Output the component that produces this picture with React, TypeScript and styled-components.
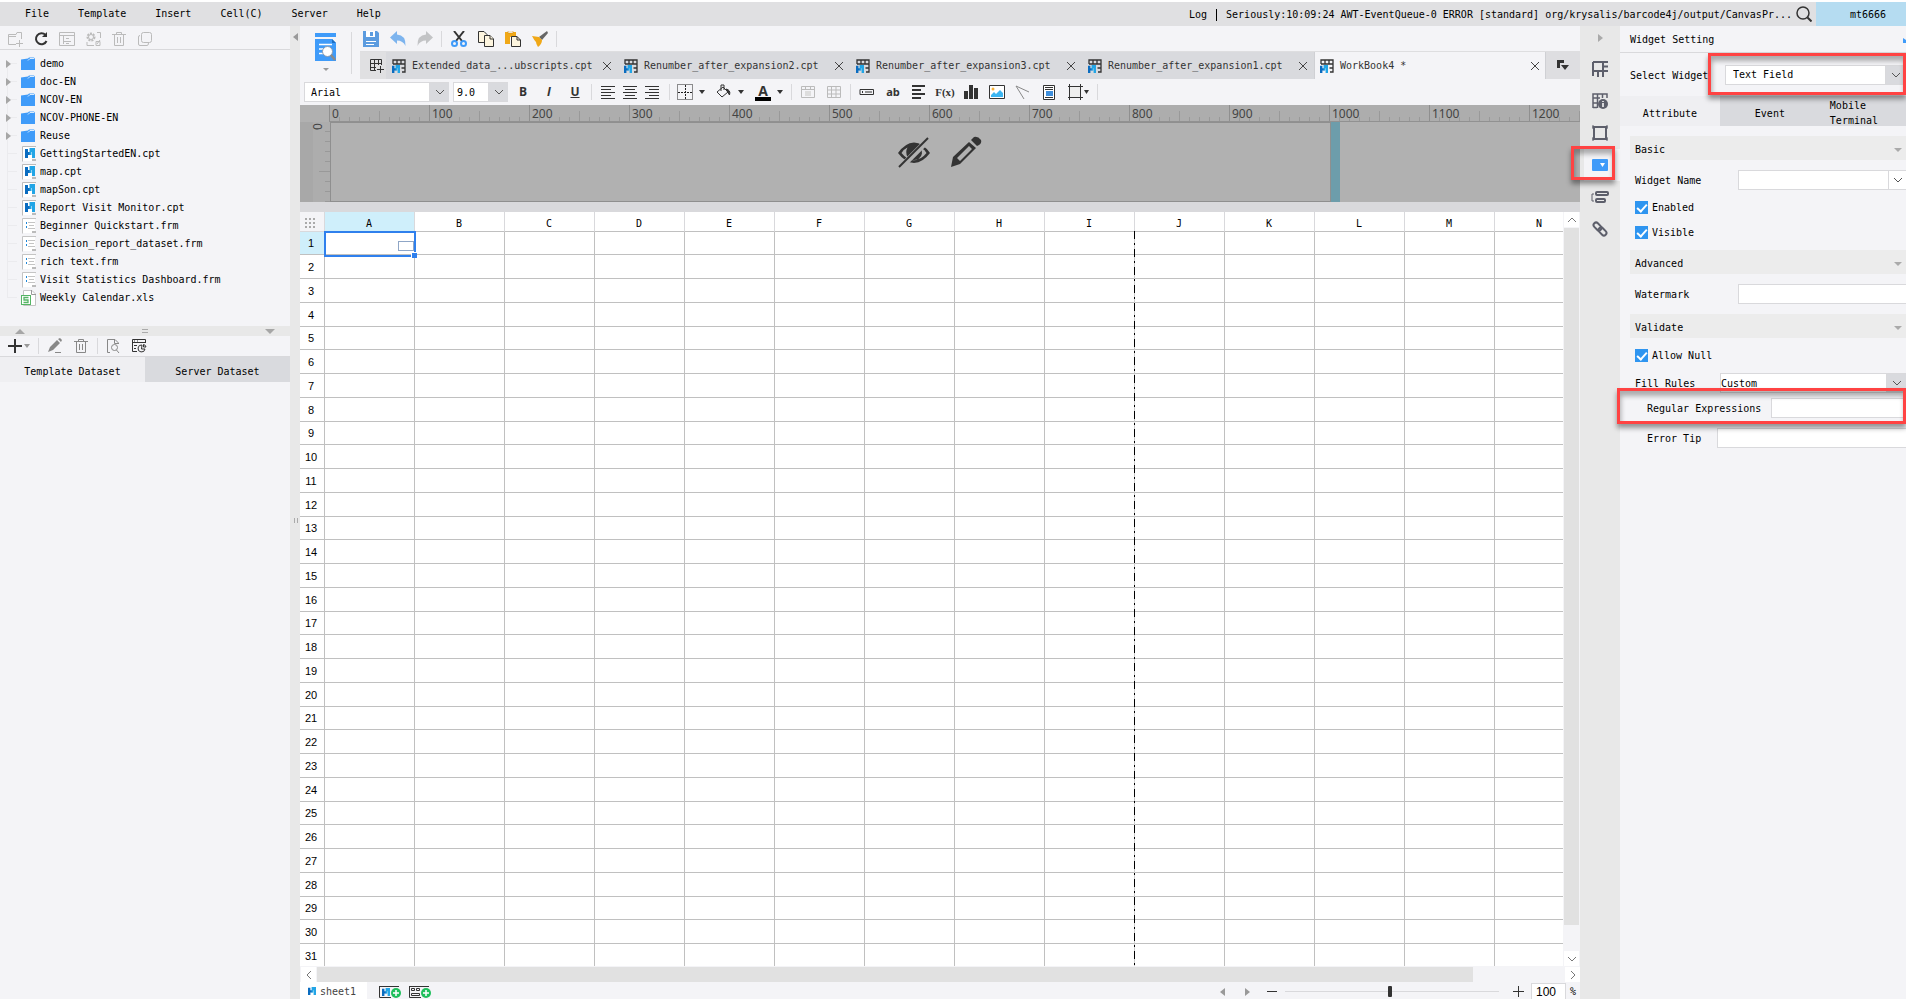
import React from "react";
import styled, { createGlobalStyle, css } from "styled-components";

const c = {
  bar: "#e0e0e2",
  panel: "#f4f4f7",
  tab: "#d9dade",
  line: "#d9d9dc",
  strip: "#e8e8e8",
  branch: "#ebebee",
  mute: "#a6a6a6",
  blue: "#3f9bf9",
  pick: "#cfeffb",
  alert: "#ff4343",
};

const Global = createGlobalStyle`
  * { box-sizing: border-box; }
  html, body, #root { height: 100%; }
  body { margin: 0; overflow: hidden; background: #fff; color: #000;
    font: 10px/16px "DejaVu Sans Mono", "Liberation Mono", monospace; }
  button, input, select { font: inherit; color: inherit; margin: 0; }
  button { padding: 0; border: 0; background: none; }
  svg { display: block; flex: none; }
`;

const Page = styled.div`
  display: flex;
  flex-direction: column;
  height: 100vh;
  padding-top: 2px;
`;

const MenuBar = styled.header`
  display: flex;
  align-items: center;
  height: 24px;
  flex: none;
  background: ${c.bar};
`;
const Menus = styled.nav`
  display: flex;
  gap: 29px;
  padding-left: 25px;
  flex: 1;
`;
const MenuButton = styled.button`
  white-space: pre;
`;
const Log = styled.div`
  display: flex;
  align-items: center;
  gap: 9px;
  padding-top: 2px;
  white-space: nowrap;
`;
const LogBar = styled.span`
  width: 1px;
  height: 12px;
  background: #000;
`;
const SearchButton = styled.button`
  margin: 0 4px;
`;
const User = styled.button`
  width: 90px;
  height: 24px;
  padding: 2px 0 0 14px;
  background: #b5dcf1;
`;

const Body = styled.div`
  display: flex;
  flex: 1;
  min-height: 0;
`;

/* ---------- left: files and datasets ---------- */

const Left = styled.aside`
  display: flex;
  flex-direction: column;
  width: 290px;
  flex: none;
  background: ${c.panel};
`;
const FileTools = styled.div`
  display: flex;
  align-items: center;
  gap: 10px;
  height: 24px;
  padding: 2px 0 0 7px;
  border-bottom: 1px solid ${c.line};
`;
const Tree = styled.ul`
  list-style: none;
  margin: 0;
  padding: 5px 0 19px;
  background: linear-gradient(${c.branch}, ${c.branch}) 7px 14px / 1px calc(100% - 42px) no-repeat;
`;
const TreeItem = styled.li`
  display: flex;
  align-items: center;
  height: 18px;
  padding-left: 6px;
  white-space: nowrap;
`;
const Twisty = styled.span<{ $open: boolean }>`
  width: 15px;
  height: 8px;
  background: linear-gradient(${c.branch}, ${c.branch}) 2px 3px / 9px 1px no-repeat;
  ${(p) => p.$open && css`
    &::before {
      content: "";
      display: block;
      width: 5px;
      height: 8px;
      background: ${c.mute};
      clip-path: polygon(0 0, 100% 50%, 0 100%);
    }
  `}
`;
const FileName = styled.span`
  padding-left: 4px;
`;
const Splitter = styled.div`
  display: flex;
  align-items: center;
  justify-content: space-between;
  height: 10px;
  padding: 0 15px;
  background: ${c.strip};
`;
const DataTools = styled.div`
  display: flex;
  align-items: center;
  height: 21px;
  border-bottom: 1px solid ${c.line};
`;
const Group = styled.div<{ $gap?: number; $last?: boolean; $left?: number }>`
  display: flex;
  align-items: center;
  gap: ${(p) => p.$gap ?? 10}px;
  height: 16px;
  padding: 0 8px 0 ${(p) => p.$left ?? 8}px;
  border-right: ${(p) => (p.$last ? "0" : "1px solid " + c.line)};
`;
const Split = styled.button<{ $gap?: number }>`
  display: flex;
  align-items: center;
  gap: ${(p) => p.$gap ?? 6}px;
`;
const DataTabs = styled.div`
  display: flex;
`;
const DataTab = styled.button<{ $on?: boolean }>`
  flex: 1;
  height: 25px;
  padding-top: 5px;
  background: ${(p) => (p.$on ? "#efeff2" : c.tab)};
`;

const Gutter = styled.div`
  display: flex;
  flex-direction: column;
  align-items: center;
  width: 10px;
  flex: none;
  padding: 7px 0 0 1px;
  background: ${c.strip};
`;
const Grip = styled.span`
  width: 4px;
  height: 5px;
  margin: auto;
  border: solid #aaa;
  border-width: 0 1px;
`;

/* ---------- centre: designer ---------- */

const Centre = styled.main`
  display: flex;
  flex-direction: column;
  flex: 1;
  min-width: 0;
  background: ${c.panel};
`;
const Top = styled.div`
  display: flex;
  height: 53px;
  flex: none;
`;
const Preview = styled.button`
  display: flex;
  flex-direction: column;
  align-items: center;
  width: 52px;
  height: 42px;
  margin: 6px 8px 0 0;
  border-right: 1px solid ${c.line};
`;
const TopRight = styled.div`
  flex: 1;
  min-width: 0;
`;
const EditTools = styled.div`
  display: flex;
  align-items: center;
  height: 25px;
`;
const FileTabs = styled.div`
  display: flex;
  height: 28px;
  background: ${c.bar};
  border-top: 1px solid #dedee0;
`;
const AddTab = styled.button`
  width: 26px;
  padding-left: 9px;
`;
const FileTab = styled.div<{ $on?: boolean }>`
  display: flex;
  align-items: center;
  width: 232px;
  padding: 0 5px;
  gap: 6px;
  white-space: nowrap;
  color: #333;
  background: ${(p) => (p.$on ? c.panel : c.tab)};
  border: solid ${(p) => (p.$on ? "#cfd0d4" : c.tab)};
  border-width: 0 1px;
`;
const TabName = styled.span`
  flex: 1;
`;
const TabMenu = styled.button`
  flex: 1;
  padding-left: 11px;
  background: #dedee1;
`;
const Format = styled.div`
  display: flex;
  align-items: center;
  height: 26px;
  padding-left: 4px;
  flex: none;
`;
const Letter = styled.button<{ $i?: boolean; $u?: boolean }>`
  width: 16px;
  font: bold 12px/14px "Open Sans", sans-serif;
  font-style: ${(p) => (p.$i ? "italic" : "normal")};
  text-decoration: ${(p) => (p.$u ? "underline" : "none")};
  color: #333;
`;
const Word = styled.button<{ $serif?: boolean }>`
  width: 16px;
  display: flex;
  justify-content: center;
  font: bold 11px/14px ${(p) => (p.$serif ? '"Liberation Serif", serif' : '"Open Sans", sans-serif')};
  color: #333;
`;
const FontColor = styled.span`
  width: 16px;
  border-bottom: 4px solid #000;
  font: bold 14px/13px "Open Sans", sans-serif;
  color: #333;
`;

const ComboBox = styled.span<{ $w?: number }>`
  position: relative;
  display: flex;
  height: 20px;
  ${(p) => (p.$w ? css`width: ${p.$w}px; margin-right: 4px;` : css`flex: 1;`)}
`;
const Select = styled.select<{ $pad?: number }>`
  appearance: none;
  width: 100%;
  height: 20px;
  padding: 1px 20px 0 ${(p) => p.$pad ?? 6}px;
  border: 1px solid ${c.line};
  border-radius: 0;
  background: #fff;
`;
const Arrow = styled.span<{ $plain?: boolean }>`
  position: absolute;
  right: 0;
  top: 0;
  display: grid;
  place-items: center;
  width: ${(p) => (p.$plain ? 18 : 20)}px;
  height: 20px;
  pointer-events: none;
  border: 1px solid ${c.line};
  border-right: 0;
  background: ${(p) => (p.$plain ? "#fff" : c.tab)};
`;

const Stage = styled.section`
  position: relative;
  display: flex;
  flex-direction: column;
  height: 97px;
  flex: none;
  background: #b1b1b1;
`;
const Ruler = styled.div`
  display: flex;
  height: 17px;
  margin-left: 29px;
  overflow: hidden;
  border-bottom: 1px solid #919191;
  background:
    repeating-linear-gradient(90deg, #8f8f8f 0 1px, transparent 1px 100px) 0 0 / 100% 16px no-repeat,
    repeating-linear-gradient(90deg, #999 0 1px, transparent 1px 50px) 0 6px / 100% 10px no-repeat,
    repeating-linear-gradient(90deg, #999 0 1px, transparent 1px 10px) 0 12px / 100% 4px no-repeat,
    #adadad;
`;
const Mark = styled.span`
  width: 100px;
  flex: none;
  padding-left: 3px;
  font: 12px/17px "Noto Sans", sans-serif;
  color: #444;
`;
const StageRow = styled.div`
  display: flex;
  flex: 1;
`;
const SideRuler = styled.div`
  width: 30px;
  padding-left: 13px;
  background:
    repeating-linear-gradient(180deg, transparent 0 9px, #999 9px 10px) right 0 / 5px 100% no-repeat,
    linear-gradient(#999, #999) right 49px / 11px 1px no-repeat,
    linear-gradient(90deg, #a8a8a8 13px, #adadad 13px);
`;
const SideMark = styled.span`
  display: block;
  width: 10px;
  height: 8px;
  font: 12px/10px "Noto Sans", sans-serif;
  color: #444;
  writing-mode: vertical-rl;
  transform: rotate(180deg);
`;
const Canvas = styled.div`
  width: 1001px;
  border: 1px solid #8f8f8f;
`;
const StageActions = styled.div`
  position: absolute;
  top: 31px;
  left: 0;
  right: 0;
  display: flex;
  justify-content: center;
  gap: 18px;
`;
const CanvasEdge = styled.div`
  width: 9px;
  background: #6d9dab;
`;
const Band = styled.div`
  height: 10px;
  flex: none;
  background: ${c.line};
`;

const SheetArea = styled.div`
  display: flex;
  flex: 1;
  min-height: 0;
`;
const Sheet = styled.div`
  position: relative;
  flex: 1;
  min-width: 0;
  overflow: hidden;
  background: #fff;
`;
const Table = styled.table`
  width: 1285px;
  table-layout: fixed;
  border-collapse: separate;
  border-spacing: 0;
`;
const ColHead = styled.th<{ $w: number; $on?: boolean }>`
  width: ${(p) => p.$w}px;
  height: 20px;
  padding: 5px 1px 0 0;
  line-height: 14px;
  font-weight: normal;
  border: solid ${c.line};
  border-width: 0 1px 1px 0;
  border-bottom-color: #c0c0c0;
  background: ${(p) => (p.$on ? c.pick : "#fff")};
`;
const Corner = styled.td`
  padding: 3px 0 0 5px;
  width: 25px;
  border: solid ${c.line};
  border-width: 0 1px 1px 0;
  background: ${c.panel};
`;
const RowHead = styled.th<{ $h: number; $on?: boolean }>`
  height: ${(p) => p.$h}px;
  padding: 0 2px 0 0;
  font: 11px/14px "Liberation Sans", Arial, sans-serif;
  border: solid #c0c0c0;
  border-width: 0 1px 1px 0;
  background: ${(p) => (p.$on ? c.pick : "#fff")};
`;
const Cell = styled.td`
  padding: 0;
  border: solid #c0c0c0;
  border-width: 0 1px 1px 0;
`;
const Picked = styled.div`
  position: absolute;
  left: 24px;
  top: 19px;
  width: 92px;
  height: 26px;
  border: 2px solid #2f80ed;
`;
const Handle = styled.span`
  position: absolute;
  right: -3px;
  bottom: -3px;
  width: 6px;
  height: 6px;
  border: solid #fff;
  border-width: 1px 0 0 1px;
  background: #2f80ed;
`;
const CellWidget = styled.span`
  position: absolute;
  right: 0;
  bottom: 4px;
  width: 16px;
  height: 10px;
  border: 1px solid #8fa6c6;
`;
const PageBreak = styled.div`
  position: absolute;
  left: 834px;
  top: 19px;
  bottom: 0;
  width: 1px;
  background: repeating-linear-gradient(180deg, #000 0 8px, #ccc 8px 12px, #000 12px 14px, #ccc 14px 18px);
`;
const VScroll = styled.div`
  display: flex;
  flex-direction: column;
  width: 17px;
  padding: 0 1px;
`;
const HScroll = styled.div`
  display: flex;
  height: 16px;
  flex: none;
  padding: 1px 0 0 1px;
`;
const ScrollButton = styled.button`
  display: grid;
  place-items: center;
  width: 15px;
  height: 15px;
  flex: none;
  background: #fff;
`;
const Track = styled.div<{ $v?: boolean }>`
  display: flex;
  flex-direction: ${(p) => (p.$v ? "column" : "row")};
  flex: 1;
  padding: ${(p) => (p.$v ? "1px 0 0" : "0 0 0 1px")};
`;
const Thumb = styled.div<{ $grow: number }>`
  flex: ${(p) => p.$grow};
  background: #e1e1e1;
`;
const Rest = styled.div<{ $grow: number }>`
  flex: ${(p) => p.$grow};
`;
const Foot = styled.footer`
  display: flex;
  align-items: center;
  height: 17px;
  flex: none;
`;
const SheetTab = styled.button`
  display: flex;
  align-items: center;
  gap: 4px;
  width: 67px;
  height: 17px;
  padding: 2px 0 0 8px;
  background: #fff;
  color: #444;
`;
const SheetAdds = styled.div`
  display: flex;
  gap: 8px;
  flex: 1;
  padding: 2px 0 0 12px;
`;
const Zoom = styled.div`
  display: flex;
  align-items: center;
  height: 17px;
  padding-top: 2px;
`;
const ZoomStep = styled.button<{ $gap: number }>`
  margin-right: ${(p) => p.$gap}px;
`;
const ZoomRange = styled.input`
  appearance: none;
  width: 214px;
  height: 11px;
  margin: 0 14px 0 7px;
  background: linear-gradient(${c.line}, ${c.line}) 0 5px / 100% 1px no-repeat;
  &::-webkit-slider-thumb {
    appearance: none;
    width: 4px;
    height: 11px;
    border-radius: 1px;
    background: #333;
  }
`;
const ZoomInput = styled.input`
  width: 35px;
  height: 17px;
  padding: 0 4px;
  border: solid ${c.line};
  border-width: 1px 1px 0;
  background: #fff;
  font: 12px/16px "Liberation Sans", Arial, sans-serif;
`;
const Percent = styled.label`
  width: 14px;
  padding-left: 4px;
`;

/* ---------- right: widget settings ---------- */

const Strip = styled.nav`
  display: flex;
  flex-direction: column;
  width: 40px;
  flex: none;
  background: ${c.strip};
`;
const Collapse = styled.button`
  display: grid;
  place-items: center;
  height: 24px;
  margin-bottom: 3px;
`;
const StripButton = styled.button<{ $on?: boolean }>`
  position: relative;
  display: grid;
  place-items: center;
  width: 32px;
  height: 32px;
  margin-left: 4px;
  ${(p) => p.$on && css`
    width: 36px;
    padding-right: 4px;
    background: ${c.panel};
  `}
`;
const Highlight = styled.span<{ $l: number; $t: number; $h: number; $w?: number }>`
  position: absolute;
  left: ${(p) => p.$l}px;
  top: ${(p) => p.$t}px;
  height: ${(p) => p.$h}px;
  ${(p) => (p.$w ? css`width: ${p.$w}px;` : css`right: 0;`)}
  border: 3px solid ${c.alert};
  pointer-events: none;
  box-shadow: 0 4px 5px rgba(0, 0, 0, 0.4), inset 1px 5px 5px rgba(0, 0, 0, 0.3);
  z-index: 2;
`;
const Panel = styled.aside`
  width: 286px;
  flex: none;
  background: ${c.panel};
`;
const PanelHead = styled.h2`
  display: flex;
  align-items: center;
  justify-content: space-between;
  height: 27px;
  margin: 0;
  padding: 2px 0 0 10px;
  font: inherit;
  border-bottom: 1px solid ${c.line};
`;
const WidgetRow = styled.div`
  position: relative;
  display: flex;
  align-items: center;
  height: 43px;
  padding: 0 1px 0 10px;
`;
const PanelTabs = styled.div`
  display: flex;
  height: 30px;
`;
const PanelTab = styled.button<{ $on?: boolean; $left?: boolean }>`
  width: 100px;
  padding: 6px 0 0;
  background: ${(p) => (p.$on ? "#efeff2" : c.tab)};
  ${(p) => p.$left && css`
    width: auto;
    flex: 1;
    padding: 2px 28px 0 10px;
    text-align: left;
    line-height: 15px;
  `}
`;
const Section = styled.section`
  padding: 10px 0 0 10px;
`;
const SectionHead = styled.button`
  display: flex;
  align-items: center;
  justify-content: space-between;
  width: 100%;
  height: 24px;
  padding: 3px 4px 0 5px;
  background: #ececec;
`;
const Fields = styled.div`
  padding: 5px 0 5px 5px;
`;
const Field = styled.div<{ $indent?: boolean; $tight?: boolean }>`
  position: relative;
  display: flex;
  align-items: center;
  padding: ${(p) => (p.$tight ? 0 : 5)}px 0 5px ${(p) => (p.$indent ? 12 : 0)}px;
`;
const Label = styled.label<{ $w: number }>`
  width: ${(p) => p.$w}px;
  padding-top: 2px;
  flex: none;
  white-space: nowrap;
`;
const TextInput = styled.input`
  flex: 1;
  min-width: 0;
  height: 20px;
  border: 1px solid ${c.line};
  border-right: 0;
  background: #fff;
`;
const Check = styled.label`
  display: flex;
  align-items: center;
  gap: 4px;
  height: 25px;
`;
const CheckInput = styled.input`
  appearance: none;
  display: grid;
  place-items: center;
  width: 13px;
  height: 13px;
  background: #2f95f0;
  &::after {
    content: "";
    width: 4px;
    height: 8px;
    margin-bottom: 2px;
    border: solid #fff;
    border-width: 0 2px 2px 0;
    transform: rotate(42deg);
  }
`;

/* ---------- icons ---------- */

type IconProps = { w?: number; h?: number; s?: string; f?: string; sw?: number; children: React.ReactNode };
const Ico = ({ w = 16, h = 16, s = "none", f = "none", sw = 1, children }: IconProps) => (
  <svg width={w} height={h} viewBox={`0 0 ${w} ${h}`} stroke={s} fill={f} strokeWidth={sw} aria-hidden="true">
    {children}
  </svg>
);
const Caret = ({ color = "#999", w = 6 }: { color?: string; w?: number }) => (
  <Ico w={w} h={4} f={color}><path d={`M0 0H${w}L${w / 2} 4Z`} /></Ico>
);
const Chevron = () => <Ico w={10} h={6} s="#555"><path d="M1 1L5 5L9 1" /></Ico>;
const Cross = () => <Ico w={10} h={10} s="#444"><path d="M1 1L9 9M9 1L1 9" /></Ico>;
const SideTri = ({ flip, color = "#999" }: { flip?: boolean; color?: string }) => (
  <Ico w={5} h={8} f={color}><path d={flip ? "M0 0L5 4L0 8Z" : "M5 0L0 4L5 8Z"} /></Ico>
);
const Trash = ({ color }: { color: string }) => (
  <Ico s={color}><path d="M1 3.5H15M3.5 3.5V14.5H12.5V3.5M5.5 3V1.5H10.5V3M6.5 6V12M9.5 6V12" /></Ico>
);
const Folder = () => (
  <Ico w={15} h={14} f={c.blue}>
    <path d="M0 2.5L7 1.5L8 0.5H13L14 2V13H0Z" />
    <path d="M7 3.5L9 1.5H13" stroke="#fff" fill="none" strokeWidth=".8" />
  </Ico>
);
const Logo = ({ x, y, k }: { x: number; y: number; k: number }) => (
  <g transform={`translate(${x} ${y}) scale(${k})`} stroke="none">
    <path d="M0 1H3V4H5.500V7H3V10H0Z" fill="#0a6cc0" />
    <path d="M4.500 0H10V10H7V4H6.500V7H4.500Z" fill="#22a5e6" />
  </g>
);
const Cpt = () => (
  <Ico w={15} h={16}>
    <path d="M2 1H14V12H11V15H2Z" fill="#fff" /><path d="M1.500 15.500V.5H15" stroke="#bbb" /><path d="M11 13H15V15H11Z" fill="#bbb" />
    <Logo x={4} y={2} k={1} />
  </Ico>
);
const Frm = () => (
  <Ico w={15} h={16}>
    <path d="M2 1H14V15H2Z" fill="#fff" /><path d="M1.500 15.500V.5H15" stroke="#c4c4c4" /><path d="M11 13H15V15H11Z" fill="#bbb" />
    <path d="M5.500 4V6M5.500 8V10" stroke="#1b86d8" />
    <path d="M7 4.500H14M8 7.500H13M7 10.500H14" stroke="#c4c4c4" />
  </Ico>
);
const Xls = () => (
  <Ico w={15} h={16}>
    <path d="M2.500 0.500H11L14.500 4V15.500H2.500Z" fill="#fff" stroke="#c4c4c4" />
    <path d="M10.500 0V4.500H15" stroke="#999" />
    <rect x=".5" y="5.500" width="9" height="9" fill="#fff" stroke="#55b565" />
    <path d="M7.500 7.500H3V10H7V12.500H2.500" stroke="#55b565" strokeWidth="1.300" />
  </Ico>
);
const TabIcon = () => (
  <Ico w={14} h={14} s="#333">
    <path d="M1 5V1H13V13H10M1 5H13M5 1V5M9 1V5M9.500 9H13" strokeWidth="1.300" />
    <Logo x={0} y={6} k={0.8} />
  </Ico>
);
const Lines = ({ rows }: { rows: number[][] }) => (
  <Ico s="#333">{rows.map(([a, b], i) => <path key={i} d={`M${a} ${2.5 + i * 3}H${b}`} />)}</Ico>
);

const tree: [string, string][] = [
  ["d", "demo"], ["d", "doc-EN"], ["d", "NCOV-EN"], ["d", "NCOV-PHONE-EN"], ["d", "Reuse"],
  ["c", "GettingStartedEN.cpt"], ["c", "map.cpt"], ["c", "mapSon.cpt"], ["c", "Report Visit Monitor.cpt"],
  ["f", "Beginner Quickstart.frm"], ["f", "Decision_report_dataset.frm"], ["f", "rich text.frm"],
  ["f", "Visit Statistics Dashboard.frm"], ["x", "Weekly Calendar.xls"],
];
const menus = ["File", "Template", "Insert", "Cell(C)", "Server", "Help"];
const tabs = [
  "Extended_data_...ubscripts.cpt", "Renumber_after_expansion2.cpt", "Renumber_after_expansion3.cpt",
  "Renumber_after_expansion1.cpt", "WorkBook4 *",
];
const cols = "ABCDEFGHIJKLMN".split("");
const rows = Array.from({ length: 31 }, (_, i) => i + 1);
const rowHeight = (n: number) => (n % 4 === 1 ? 23 : 24);
const marks = Array.from({ length: 13 }, (_, i) => i * 100);

const Combo = ({ id, label, value, w, pad, plain }: { id: string; label?: string; value: string; w?: number; pad?: number; plain?: boolean }) => (
  <ComboBox $w={w}>
    <Select id={id} aria-label={label} $pad={pad} defaultValue={value}><option>{value}</option></Select>
    <Arrow $plain={plain}><Chevron /></Arrow>
  </ComboBox>
);
const B = ({ t, children }: { t: string; children: React.ReactNode }) => <button aria-label={t}>{children}</button>;

const LeftPanel = () => (
  <Left>
    <FileTools>
      <B t="New folder"><Ico s="#bbb"><path d="M9 13.500H1.500V3.500H9L10 1.500H14.500V8M1.500 5.500H9M12.500 9V16M9 12.500H16" /></Ico></B>
      <B t="Refresh"><Ico s="#333" sw={2}><path d="M12.500 4A5.500 5.500 0 1 0 13.500 10" /><path d="M14 1V6H9Z" fill="#333" stroke="none" /></Ico></B>
      <B t="Show in folder"><Ico s="#bbb"><path d="M.5 1.500H15.500V14.500H.5ZM.5 4.500H15.500M4.500 5V13M7 7.500H10M7 12.500H10M5 10.500H12" /></Ico></B>
      <B t="Settings"><Ico s="#bbb"><circle cx="6" cy="6" r="3.500" strokeWidth="2" strokeDasharray="2 1" /><circle cx="6" cy="6" r="2.500" /><path d="M12 1.500H15.500V7M2 11V14.500H9M11 10.500H15V14.500H11ZM15 9L12 13" /></Ico></B>
      <B t="Delete"><Trash color="#bbb" /></B>
      <B t="Copy"><Ico s="#bbb"><rect x="4.500" y="1.500" width="10" height="10" rx="2" /><path d="M3 4.500Q1.500 4.500 1.500 6V13Q1.500 14.500 3 14.500H10Q11.500 14.500 11.500 12" /></Ico></B>
    </FileTools>
    <Tree>
      {tree.map(([k, n]) => (
        <TreeItem key={n}>
          <Twisty $open={k === "d"} />
          {k === "d" ? <Folder /> : k === "c" ? <Cpt /> : k === "f" ? <Frm /> : <Xls />}
          <FileName>{n}</FileName>
        </TreeItem>
      ))}
    </Tree>
    <Splitter>
      <Ico w={10} h={5} f={c.mute}><path d="M0 5L5 0L10 5Z" /></Ico>
      <Ico w={6} h={4} s="#aaa"><path d="M0 .5H6M0 3.500H6" /></Ico>
      <Ico w={10} h={5} f={c.mute}><path d="M0 0L5 5L10 0Z" /></Ico>
    </Splitter>
    <DataTools>
      <Group>
        <Split $gap={2} aria-label="Add dataset"><Ico w={14} s="#333" sw={2}><path d="M7 1V15M0 8H14" /></Ico><Caret /></Split>
      </Group>
      <Group>
        <B t="Edit"><Ico f="#888"><path d="M1 14L3 9L10 2L13 5L6 12ZM11 1L13 0L15 2L14 4ZM8 14H14V15H8Z" /></Ico></B>
        <B t="Delete dataset"><Trash color="#888" /></B>
      </Group>
      <Group $last>
        <B t="Preview dataset"><Ico s="#888"><path d="M4 14.500H1.500V1.500H9L12.500 5V6M8.500 2V5.500H12" /><circle cx="8.500" cy="9.500" r="3" /><path d="M10.500 12L13 15" /></Ico></B>
        <B t="Dataset cache"><Ico s="#333"><path d="M5 13.500H.5V1.500H13.500V5M.5 4.500H13.500M2 3H3M5 3H6M2 7.500H5M2 10.500H4" /><path d="M10 7A3.500 3.500 0 1 0 13 11H9.500ZM11.500 9V6.500A3 3 0 0 1 14 9Z" /></Ico></B>
      </Group>
    </DataTools>
    <DataTabs>
      <DataTab $on>Template Dataset</DataTab>
      <DataTab>Server Dataset</DataTab>
    </DataTabs>
  </Left>
);

const Toolbars = () => (
  <>
    <Top>
      <Preview aria-label="Preview">
        <Ico w={22} h={30}>
          <path d="M0 1H21V5H0ZM0 7H17L21 11V29H0Z" fill={c.blue} />
          <path d="M17 7V11H21Z" fill="#1c6fc4" />
          <path d="M4 12.500H17M4 17H9M4 21.500H8" stroke="#fff" strokeWidth="1.500" />
          <circle cx="12.500" cy="19.500" r="5" fill="#fff" stroke="#8a9bb0" />
          <path d="M16 23L20 28" stroke="#8a8a8a" strokeWidth="2.500" />
        </Ico>
        <Ico w={6} h={9} f="#999"><path d="M0 6H6L3 9Z" /></Ico>
      </Preview>
      <TopRight>
        <EditTools>
          <Group $gap={11} $left={3}>
            <B t="Save"><Ico><path d="M0 0H14L16 2V16H0Z" fill="#5b9bdf" /><path d="M3 0H12V6H3Z" fill="#fff" /><path d="M7 1H10V5H7Z" fill="#5b9bdf" /><path d="M3 10.500H13M3 13.500H11" stroke="#fff" /></Ico></B>
            <B t="Undo"><Ico f="#7db4ee"><path d="M0 6.500L7 0V3.500Q16 4 15.500 15Q13 9.500 7 9.500V13Z" /></Ico></B>
            <B t="Redo"><Ico f="#c3c4c6"><path d="M16 6.500L9 0V3.500Q0 4 .5 15Q3 9.500 9 9.500V13Z" /></Ico></B>
          </Group>
          <Group $gap={11} $left={9}>
            <B t="Cut"><Ico><path d="M3 0L11 10M13 0L5 10" stroke="#333" strokeWidth="2" /><circle cx="3.500" cy="12.500" r="2.500" stroke={c.blue} strokeWidth="2" /><circle cx="12.500" cy="12.500" r="2.500" stroke={c.blue} strokeWidth="2" /></Ico></B>
            <B t="Copy cells"><Ico s="#333" f="#fdf5df"><path d="M.5 .5H6L9 3.500V11.500H.5Z" /><path d="M6.500 4.500H12L15.500 8V15.500H6.500Z" /><path d="M12 4.500V8H15.500" /></Ico></B>
            <B t="Paste"><Ico><path d="M0 1H11V6H5V13H0Z" fill="#f0a818" /><path d="M3 0H8V2H3Z" fill="#fff" stroke="#c98b10" strokeWidth=".5" /><path d="M6.500 5.500H12L15.500 9V15.500H6.500Z" fill="#fdf5df" stroke="#333" /><path d="M12 5.500V9H15.500" stroke="#333" /></Ico></B>
            <B t="Format painter"><Ico><path d="M15 0L16 2L10 9L7 6Z" fill="#666" /><path d="M0 5L7 6L10 9Q10 13 6 16Q4 13 4 11Q2 9 0 5Z" fill="#f0a818" /></Ico></B>
          </Group>
        </EditTools>
        <FileTabs>
          <AddTab aria-label="New report"><Ico s="#333"><path d="M1.500 1.500H12.500V7M1.500 1.500V12.500H7M1.500 5.500H12.500M1.500 9.500H7M5.500 1.500V12.500M9.500 1.500V7M11.500 8V15M8 11.500H15" /></Ico></AddTab>
          {tabs.map((t, i) => (
            <FileTab key={t} $on={i === 4}>
              <TabIcon /><TabName>{t}</TabName><B t={"Close " + t}><Cross /></B>
            </FileTab>
          ))}
          <TabMenu aria-label="All tabs"><Ico w={13} h={11} f="#333"><path d="M0 0H7V3H3V8H0ZM4 5H12L8 10Z" /></Ico></TabMenu>
        </FileTabs>
      </TopRight>
    </Top>
    <Format>
      <Combo id="font" label="Font" value="Arial" w={145} />
      <Combo id="size" label="Font size" value="9.0" w={55} pad={3} />
      <Group $left={3}><Letter>B</Letter><Letter $i>I</Letter><Letter $u>U</Letter></Group>
      <Group $gap={6} $left={9}>
        <B t="Align left"><Lines rows={[[0, 14], [0, 10], [0, 14], [0, 10], [0, 14]]} /></B>
        <B t="Align centre"><Lines rows={[[0, 14], [2, 12], [0, 14], [2, 12], [0, 14]]} /></B>
        <B t="Align right"><Lines rows={[[0, 14], [4, 14], [0, 14], [4, 14], [0, 14]]} /></B>
      </Group>
      <Group $gap={11} $left={7}>
        <Split aria-label="Borders"><Ico s="#222"><path d="M.5 .5H15.500V15.500H.5Z" strokeDasharray="1 1" /><path d="M1 8.500H15M8.500 1V15" strokeDasharray="2 1" /></Ico><Caret color="#333" /></Split>
        <Split aria-label="Fill"><Ico s="#333"><path d="M1 8L7 3L12 8L6 13ZM5 7V1H8V6" /><path d="M10 5Q15 6 13.500 11L11 7Z" fill="#333" /></Ico><Caret color="#333" /></Split>
        <Split aria-label="Text colour"><FontColor>A</FontColor><Caret color="#333" /></Split>
      </Group>
      <Group>
        <B t="Merge cells"><Ico s="#bbb"><path d="M1.500 2.500H14.500V13.500H1.500ZM1.500 5.500H14.500M5.500 2.500V5M10.500 2.500V5" /><path d="M5 7H11V12H5Z" fill="#ddd" stroke="none" /></Ico></B>
        <B t="Unmerge cells"><Ico s="#bbb"><path d="M1.500 2.500H14.500V13.500H1.500ZM1.500 6H14.500M1.500 10H14.500M5.500 2.500V13.500M10 2.500V13.500" /></Ico></B>
      </Group>
      <Group>
        <B t="Widget"><Ico s="#333"><path d="M1 5.500H14.500V10.500H1ZM3.500 7V9M6 8H13" /></Ico></B>
        <Word>ab</Word>
        <B t="Rich text"><Ico s="#333" sw={2}><path d="M1 2H14M1 6H10M1 10H14M1 14H10" /></Ico></B>
        <Word $serif>F(x)</Word>
        <B t="Chart"><Ico f="#333"><path d="M1 7H5V15H1ZM6 1H10V15H6ZM11 4H15V15H11Z" /></Ico></B>
        <B t="Picture"><Ico><path d="M.5 1.500H15.500V14.500H.5Z" fill="#fff" stroke="#333" /><circle cx="4" cy="5" r="1.500" fill="#f7b23b" /><path d="M2 13V11L5 8L7 10L11 6L14 9V13Z" fill="#3cb6f2" /></Ico></B>
        <B t="Slope line"><Ico s="#888"><path d="M1 2L14 8M1 2L9 15" /></Ico></B>
        <B t="Sub report"><Ico s="#333"><path d="M2.500 1.500H13.500V15.500H2.500Z" fill="#fff" /><path d="M4 3.500H12M4 5.500H12M4 13.500H12" /><path d="M5 7H12V12H5Z" fill="#3f8fdc" stroke="none" /></Ico></B>
        <Split $gap={1} aria-label="Float element"><Ico s="#333"><path d="M2.500 2.500H13.500V13.500H2.500Z" fill="#eee" /><path d="M2.500 0V16M13.500 0V16M1 2.500H16M1 13.500H16" /></Ico><Caret color="#333" w={5} /></Split>
      </Group>
    </Format>
  </>
);

const Designer = () => (
  <Centre>
    <Toolbars />
    <Stage>
      <Ruler>{marks.map((m) => <Mark key={m}>{m}</Mark>)}</Ruler>
      <StageRow>
        <SideRuler><SideMark>0</SideMark></SideRuler>
        <Canvas />
        <CanvasEdge />
      </StageRow>
      <StageActions>
        <B t="Hide"><Ico w={34} h={34} f="#333"><path d="M1 17Q8 7 17 6.500Q26 7 33 17Q26 26.500 17 27Q8 26.500 1 17ZM4.500 17Q10 24 17 24Q24 24 29.500 17Q27 13 23.500 11.500A8 8 0 0 1 10.500 21Q8 16 10.500 11.500Q7 13 4.500 17Z" fillRule="evenodd" /><path d="M3 32L32 3" stroke="#b1b1b1" strokeWidth="6" /><path d="M2 31L31 2" stroke="#333" strokeWidth="2" /></Ico></B>
        <B t="Edit canvas"><Ico w={34} h={34} f="#333"><path d="M2 31L4 21L20 6L27 12L11 28ZM8 22L11 25L23 13L20 10Z" fillRule="evenodd" /><path d="M22 4L25 1Q29 0 32 4Q33 7 30 9L28 10Z" /></Ico></B>
      </StageActions>
    </Stage>
    <Band />
    <SheetArea>
      <Sheet>
        <Table>
          <thead>
            <tr>
              <Corner><Ico w={12} h={10} s="#aaa" sw={2}><path d="M0 1H12M0 5H12M0 9H12" strokeDasharray="2 2" /></Ico></Corner>
              {cols.map((n) => <ColHead key={n} $w={90} $on={n === "A"}>{n}</ColHead>)}
            </tr>
          </thead>
          <tbody>
            {rows.map((r) => (
              <tr key={r}>
                <RowHead $h={rowHeight(r)} $on={r === 1}>{r}</RowHead>
                {cols.map((n) => <Cell key={n} />)}
              </tr>
            ))}
          </tbody>
        </Table>
        <PageBreak />
        <Picked><CellWidget /><Handle /></Picked>
      </Sheet>
      <VScroll>
        <ScrollButton aria-label="Scroll up"><Ico w={10} h={6} s="#777"><path d="M1 5L5 1L9 5" /></Ico></ScrollButton>
        <Track $v><Thumb $grow={697} /><Rest $grow={26} /></Track>
        <ScrollButton aria-label="Scroll down"><Ico w={10} h={6} s="#777"><path d="M1 1L5 5L9 1" /></Ico></ScrollButton>
      </VScroll>
    </SheetArea>
    <HScroll>
      <ScrollButton aria-label="Scroll left"><Ico w={6} h={10} s="#777"><path d="M5 1L1 5L5 9" /></Ico></ScrollButton>
      <Track><Thumb $grow={1156} /><Rest $grow={92} /></Track>
      <ScrollButton aria-label="Scroll right"><Ico w={6} h={10} s="#777"><path d="M1 1L5 5L1 9" /></Ico></ScrollButton>
    </HScroll>
    <Foot>
      <SheetTab><Ico w={8} h={9}><Logo x={0} y={0} k={0.8} /></Ico>sheet1</SheetTab>
      <SheetAdds>
        <B t="Add report sheet"><Ico w={22} h={14}><path d="M.5 1.500H20M.5 1V12.500H12" stroke="#333" /><Logo x={3} y={3} k={0.8} /><circle cx="17" cy="8" r="5" fill="#1fbf5c" /><path d="M17 5V11M14 8H20" stroke="#fff" strokeWidth="1.500" /></Ico></B>
        <B t="Add form sheet"><Ico w={22} h={14}><path d="M.5 1.500H20M.5 1V12.500H12M2.500 3.500H5.500V5.500H2.500ZM7.500 3.500H10.500V5.500H7.500ZM2.500 8.500H10.500V10.500H2.500Z" stroke="#333" /><circle cx="17" cy="8" r="5" fill="#1fbf5c" /><path d="M17 5V11M14 8H20" stroke="#fff" strokeWidth="1.500" /></Ico></B>
      </SheetAdds>
      <Zoom>
        <ZoomStep $gap={20} aria-label="Previous sheet"><SideTri /></ZoomStep>
        <ZoomStep $gap={17} aria-label="Next sheet"><SideTri flip /></ZoomStep>
        <ZoomStep $gap={0} aria-label="Zoom out"><Ico w={11} h={11} s="#333"><path d="M0 5.500H10" /></Ico></ZoomStep>
        <ZoomRange type="range" aria-label="Zoom level" min={0} max={200} defaultValue={98} />
        <ZoomStep $gap={7} aria-label="Zoom in"><Ico w={11} h={11} s="#333"><path d="M0 5.500H11M5.500 0V11" /></Ico></ZoomStep>
        <ZoomInput id="zoom" defaultValue="100" />
        <Percent htmlFor="zoom">%</Percent>
      </Zoom>
    </Foot>
  </Centre>
);

const slate = "#5d5f6b";
const SideStrip = () => (
  <Strip>
    <Collapse aria-label="Collapse"><SideTri flip color="#aaa" /></Collapse>
    <StripButton aria-label="Cell element"><Ico s={slate} sw={2}><path d="M1 1H16M1 1V15M1 10H16M6 10V16M11 10V16M11 1V10M11 5.500H16" /></Ico></StripButton>
    <StripButton aria-label="Cell attribute"><Ico s={slate} sw={1.5}><path d="M1 15V1H15V5M1 5H8M1 10H5M5.500 1V15M1 14.500H5M10.500 1V5" /><circle cx="11" cy="11" r="5" fill={slate} stroke="none" /><path d="M11 8V9M11 10V14" stroke="#fff" /></Ico></StripButton>
    <StripButton aria-label="Float element settings"><Ico s={slate}><path d="M2 2H14V14H2Z" strokeWidth="2" /><path d="M0 1H2V3H0ZM14 1H16V3H14ZM0 13H2V15H0ZM14 13H16V15H14Z" /></Ico></StripButton>
    <StripButton $on aria-label="Widget settings">
      <Ico w={16} h={12}><rect width="16" height="12" rx="1" fill={c.blue} /><path d="M8 4H13L10.500 8Z" fill="#fff" /></Ico>
      <Highlight $l={-13} $t={-3} $h={34} $w={44} />
    </StripButton>
    <StripButton aria-label="Condition attribute"><Ico w={18} h={14} s={slate} sw={2}><rect x="5" y="2" width="12" height="3" rx="1" /><rect x="5" y="9" width="9" height="3" rx="1" /><path d="M3 4H1V11H3" strokeWidth="1" /></Ico></StripButton>
    <StripButton aria-label="Hyperlink"><Ico s={slate} sw={2}><rect x="1" y="3" width="9" height="5" rx="2.500" transform="rotate(45 5.500 5.500)" /><rect x="6" y="8" width="9" height="5" rx="2.500" transform="rotate(45 10.500 10.500)" /></Ico></StripButton>
  </Strip>
);

const Head = ({ children }: { children: React.ReactNode }) => (
  <SectionHead>{children}<Caret w={8} color="#aaa" /></SectionHead>
);
const Tick = ({ children }: { children: React.ReactNode }) => (
  <Check><CheckInput type="checkbox" defaultChecked />{children}</Check>
);

const Settings = () => (
  <Panel>
    <PanelHead>Widget Setting<Ico w={3} h={5} f={c.blue}><path d="M0 0L3 2V5H0Z" /></Ico></PanelHead>
    <WidgetRow>
      <Label $w={95} htmlFor="widget">Select Widget</Label>
      <Combo id="widget" value="Text Field" pad={7} />
      <Highlight $l={88} $t={0} $h={42} />
    </WidgetRow>
    <PanelTabs>
      <PanelTab $on>Attribute</PanelTab>
      <PanelTab>Event</PanelTab>
      <PanelTab $left>Mobile Terminal</PanelTab>
    </PanelTabs>
    <Section>
      <Head>Basic</Head>
      <Fields>
        <Field><Label $w={103} htmlFor="name">Widget Name</Label><Combo id="name" value="" plain /></Field>
        <Tick>Enabled</Tick>
        <Tick>Visible</Tick>
      </Fields>
      <Head>Advanced</Head>
      <Fields>
        <Field><Label $w={103} htmlFor="mark">Watermark</Label><TextInput id="mark" /></Field>
      </Fields>
      <Head>Validate</Head>
      <Fields>
        <Tick>Allow Null</Tick>
        <Field><Label $w={85} htmlFor="rules">Fill Rules</Label><Combo id="rules" value="Custom" pad={0} /></Field>
        <Field $indent $tight>
          <Label $w={124} htmlFor="regex">Regular Expressions</Label><TextInput id="regex" />
          <Highlight $l={-18} $t={-10} $h={36} />
        </Field>
        <Field $indent><Label $w={70} htmlFor="tip">Error Tip</Label><TextInput id="tip" /></Field>
      </Fields>
    </Section>
  </Panel>
);

export default function App() {
  return (
    <Page>
      <Global />
      <MenuBar>
        <Menus>{menus.map((m) => <MenuButton key={m}>{m}</MenuButton>)}</Menus>
        <Log>
          <span>Log</span><LogBar />
          <span>Seriously:10:09:24 AWT-EventQueue-0 ERROR [standard] org/krysalis/barcode4j/output/CanvasPr...</span>
        </Log>
        <SearchButton aria-label="Search"><Ico s="#333" sw={1.5}><circle cx="7" cy="7" r="6" /><path d="M11.500 11.500L15.500 15.500" strokeWidth="2" /></Ico></SearchButton>
        <User>mt6666</User>
      </MenuBar>
      <Body>
        <LeftPanel />
        <Gutter><SideTri /><Grip /></Gutter>
        <Designer />
        <SideStrip />
        <Settings />
      </Body>
    </Page>
  );
}
